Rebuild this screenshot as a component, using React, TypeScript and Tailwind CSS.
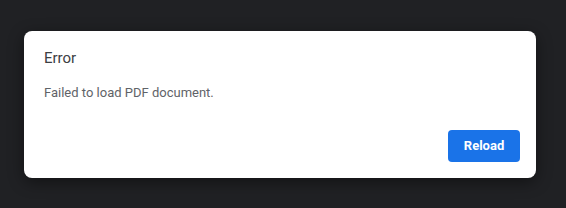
export default function App() {
  return (
    <div
      className="w-[566px] h-[208px] bg-[#202124] pt-[31px] pl-[24px]"
      style={{ fontFamily: 'Roboto, "Liberation Sans", sans-serif' }}
    >
      <div className="w-[512px] h-[147px] bg-white rounded-[8px] shadow-[0_4px_16px_rgba(0,0,0,0.45)] flex flex-col pl-[20px] pr-[16px] pt-[17px] pb-[16px]">
        <h1 className="text-[15px] leading-[20px] text-[#3c4043]">Error</h1>
        <p className="mt-[15px] text-[13px] leading-[20px] text-[#5f6368]">Failed to load PDF document.</p>
        <div className="mt-auto flex justify-end">
          <button className="w-[72px] h-[32px] rounded-[4px] bg-[#1a73e8] text-white text-[13px] font-bold">
            Reload
          </button>
        </div>
      </div>
    </div>
  );
}
